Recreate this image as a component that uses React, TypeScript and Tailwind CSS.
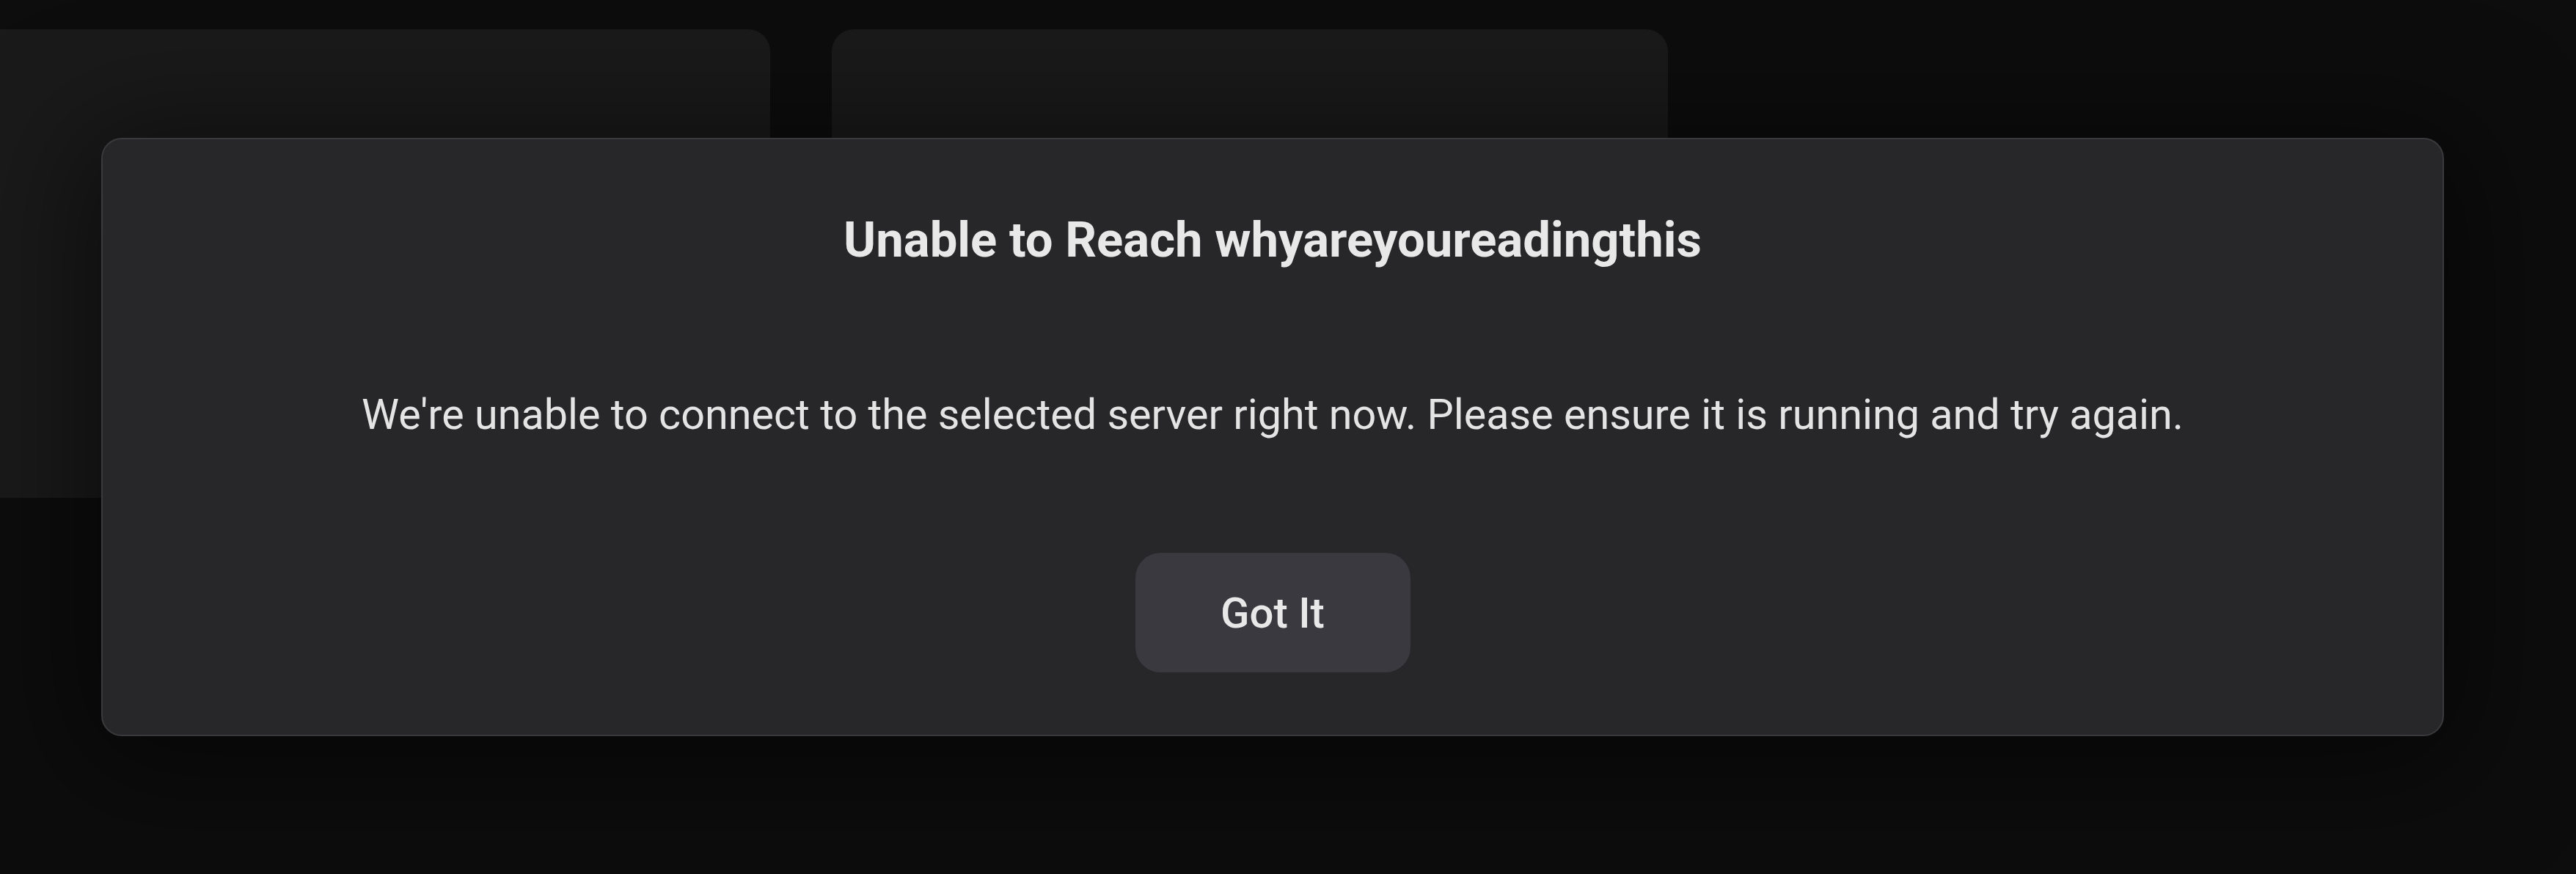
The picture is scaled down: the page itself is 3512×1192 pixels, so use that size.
export default function App() {
    return (
        <div className="relative h-[1192px] w-full overflow-hidden bg-[#0d0d0d] font-['Roboto',sans-serif]">
            {/* Server cards behind the dialog */}
            <div className="flex gap-[84px] pt-[40px] ml-[-90px]">
                <div className="h-[639px] w-[1140px] shrink-0 rounded-[30px] bg-[#1a1a1a]" />
                <div className="h-[639px] w-[1140px] shrink-0 rounded-[30px] bg-[#1a1a1a]" />
            </div>

            {/* Dialog */}
            <div className="absolute inset-0 pl-[138px] pt-[188px]">
                <div className="flex h-[816px] w-[3194px] flex-col items-center rounded-[28px] border-2 border-[#3a3a3c] bg-[#272729] pt-[99px] shadow-[0_20px_160px_30px_rgba(0,0,0,0.5)]">
                    <h2 className="text-[67px] font-bold leading-[77px] text-[#e8e8e8]">
                        Unable to Reach whyareyoureadingthis
                    </h2>
                    <p className="mt-[166px] text-[57.5px] leading-[68px] text-[#e4e4e4]">
                        We're unable to connect to the selected server right now. Please ensure it is running and try again.
                    </p>
                    <button className="mt-[154px] flex h-[163px] w-[375px] items-center justify-center rounded-[34px] bg-[#3a393f] text-[58px] font-medium leading-[68px] text-[#e8e8e8]">
                        Got It
                    </button>
                </div>
            </div>
        </div>
    )
}
